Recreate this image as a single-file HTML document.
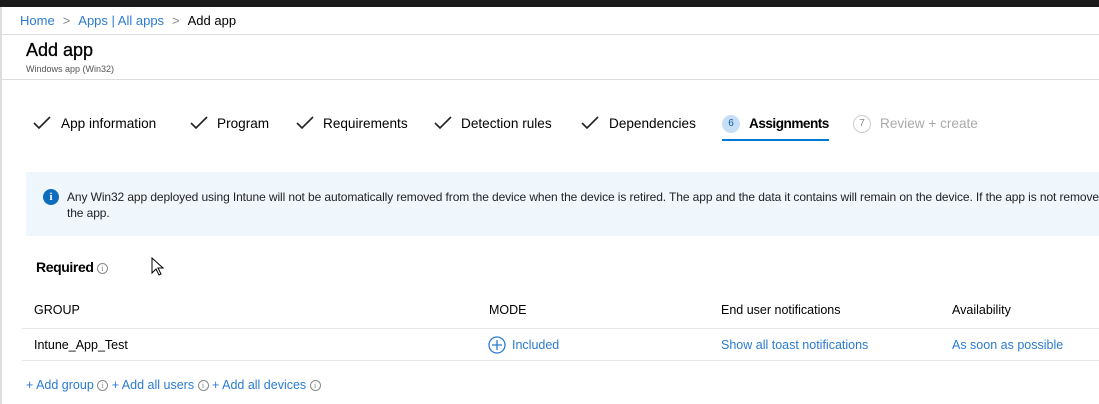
<!DOCTYPE html>
<html><head><meta charset="utf-8"><style>
*{margin:0;padding:0;box-sizing:border-box}
html,body{width:1099px;height:404px;overflow:hidden}
body{background:#fff;font-family:"Liberation Sans",sans-serif;color:#000;position:relative}
.a{position:absolute;white-space:nowrap}
.blue{color:#2b7bd3}
.info{display:inline-block;width:11px;height:11px;border:1px solid #888;border-radius:50%;font-size:8px;line-height:9px;text-align:center;color:#888;vertical-align:1px;font-family:"Liberation Serif",serif}
.t{font-size:13.6px}
</style></head><body>
<div class="a" style="left:0;top:0;width:1099px;height:7px;background:#1b1b1b"></div>
<div class="a" style="left:0;top:7px;width:2px;height:397px;background:#ddd"></div>
<div class="a" style="left:20px;top:13px;font-size:13px"><span class="blue">Home</span><span style="color:#888;margin:0 8px">&gt;</span><span class="blue">Apps | All apps</span><span style="color:#888;margin:0 8px">&gt;</span>Add app</div>
<div class="a" style="left:2px;top:34px;width:1097px;height:1px;background:#ddd"></div>
<div class="a" style="left:26px;top:40px;font-size:18px;-webkit-text-stroke:0.3px #000">Add app</div>
<div class="a" style="left:26px;top:64px;font-size:9px;color:#555">Windows app (Win32)</div>
<div class="a" style="left:2px;top:79px;width:1097px;height:1px;background:#ddd"></div>

<svg class="a" style="left:33px;top:116px" width="18" height="14"><path d="M1 7l5 5L17 1" stroke="#222" stroke-width="1.6" fill="none"/></svg>
<div class="a t" style="left:61px;top:116px">App information</div>
<svg class="a" style="left:190px;top:116px" width="18" height="14"><path d="M1 7l5 5L17 1" stroke="#222" stroke-width="1.6" fill="none"/></svg>
<div class="a t" style="left:217px;top:116px">Program</div>
<svg class="a" style="left:296px;top:116px" width="18" height="14"><path d="M1 7l5 5L17 1" stroke="#222" stroke-width="1.6" fill="none"/></svg>
<div class="a t" style="left:323px;top:116px">Requirements</div>
<svg class="a" style="left:434px;top:116px" width="18" height="14"><path d="M1 7l5 5L17 1" stroke="#222" stroke-width="1.6" fill="none"/></svg>
<div class="a t" style="left:461px;top:116px">Detection rules</div>
<svg class="a" style="left:581px;top:116px" width="18" height="14"><path d="M1 7l5 5L17 1" stroke="#222" stroke-width="1.6" fill="none"/></svg>
<div class="a t" style="left:609px;top:116px">Dependencies</div>
<div class="a" style="left:722px;top:115px;width:18px;height:18px;border-radius:50%;background:#c7dff5;color:#0b5cad;font-size:10px;text-align:center;line-height:18px">6</div>
<div class="a t" style="left:749px;top:116px;font-weight:bold;letter-spacing:-0.5px">Assignments</div>
<div class="a" style="left:722px;top:139px;width:107px;height:2px;background:#0078d4"></div>
<div class="a" style="left:853px;top:115px;width:18px;height:18px;border-radius:50%;border:1px solid #ccc;color:#888;font-size:10px;text-align:center;line-height:16px">7</div>
<div class="a t" style="left:880px;top:116px;color:#aaa">Review + create</div>

<div class="a" style="left:26px;top:172px;width:1073px;height:64px;background:#eff6fc;overflow:hidden">
<div class="a" style="left:17px;top:17px;width:16px;height:16px;border-radius:50%;background:#0f6cbd;color:#fff;font-size:11px;font-weight:bold;text-align:center;line-height:16px;font-family:'Liberation Serif',serif">i</div>
<div class="a" style="left:41px;top:17px;font-size:12px;line-height:16px;color:#222;letter-spacing:-0.1px">Any Win32 app deployed using Intune will not be automatically removed from the device when the device is retired. The app and the data it contains will remain on the device. If the app is not removed<br>the app.</div>
</div>

<div class="a" style="left:36px;top:259px;font-size:14px;font-weight:bold;letter-spacing:-0.4px">Required <span class="info" style="font-weight:normal;letter-spacing:0">i</span></div>
<svg class="a" style="left:151px;top:257px" width="14" height="20"><path d="M1 1v15l4-4 3 6 2-1-3-6h5z" fill="#fff" stroke="#000" stroke-width="1"/></svg>

<div class="a" style="left:34px;top:303px;font-size:12.5px">GROUP</div>
<div class="a" style="left:489px;top:303px;font-size:12.5px">MODE</div>
<div class="a" style="left:721px;top:303px;font-size:12.5px">End user notifications</div>
<div class="a" style="left:952px;top:303px;font-size:12.5px">Availability</div>
<div class="a" style="left:22px;top:328px;width:1077px;height:1px;background:#e6e6e6"></div>
<div class="a" style="left:34px;top:338px;font-size:12.5px">Intune_App_Test</div>
<svg class="a" style="left:488px;top:335px" width="20" height="20"><circle cx="9" cy="10" r="8" fill="none" stroke="#2b7bd3" stroke-width="1.3"/><path d="M9 5v10M4 10h10" stroke="#2b7bd3" stroke-width="1.3"/></svg>
<div class="a blue" style="left:512px;top:338px;font-size:12.5px">Included</div>
<div class="a blue" style="left:721px;top:338px;font-size:12.5px">Show all toast notifications</div>
<div class="a blue" style="left:952px;top:338px;font-size:12.5px">As soon as possible</div>
<div class="a" style="left:22px;top:360px;width:1077px;height:1px;background:#e6e6e6"></div>
<div class="a blue" style="left:26px;top:378px;font-size:12.5px">+ Add group <span class="info">i</span> + Add all users <span class="info">i</span> + Add all devices <span class="info">i</span></div>
</body></html>
